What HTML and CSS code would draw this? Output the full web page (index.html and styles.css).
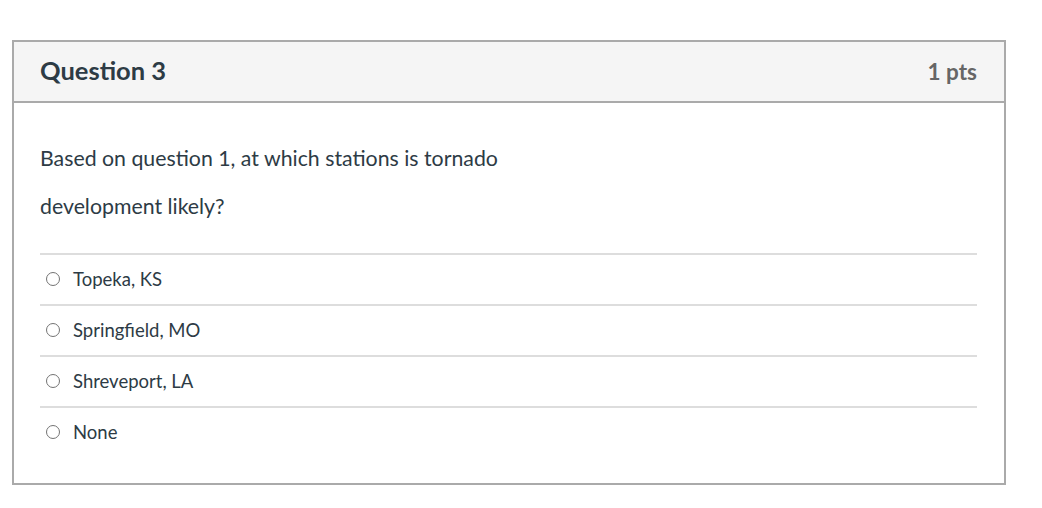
FILE: index.html
```html
<!DOCTYPE html>
<html>
<head>
<meta charset="utf-8">
<link rel="stylesheet" href="styles.css">
</head>
<body>
<div class="question">
  <div class="header">
    <div class="title">Question 3</div>
    <div class="pts">1 pts</div>
  </div>
  <div class="content">
    <div class="text">
      <p>Based on question 1, at which stations is tornado</p>
      <p>development likely?</p>
    </div>
    <div class="answers">
      <label class="answer"><span class="radio"></span><span>Topeka, KS</span></label>
      <label class="answer"><span class="radio"></span><span>Springfield, MO</span></label>
      <label class="answer"><span class="radio"></span><span>Shreveport, LA</span></label>
      <label class="answer"><span class="radio"></span><span>None</span></label>
    </div>
  </div>
</div>
</body>
</html>
```
FILE: styles.css
```css
html, body {
  margin: 0;
  background: #fff;
}
body {
  padding: 40px 0 0 12px;
  font-family: Lato, "Open Sans", sans-serif;
  color: #2d3b45;
}
.question {
  width: 990px;
  border: 2px solid #aaaaaa;
}
.header {
  height: 59px;
  background: #f5f5f5;
  border-bottom: 2px solid #aaaaaa;
  display: flex;
  align-items: center;
  justify-content: space-between;
  padding: 0 27px 0 26px;
}
.title {
  font-size: 25.5px;
  font-weight: 700;
  color: #2d3b45;
  margin-bottom: 3px;
}
.pts {
  font-size: 22.5px;
  font-weight: 700;
  color: #666666;
}
.content {
  padding: 31px 27px 26px 26px;
}
.text p {
  margin: 0;
  font-size: 21.3px;
  line-height: 48px;
}
.answers {
  margin-top: 23px;
}
.answer {
  display: flex;
  align-items: center;
  box-sizing: border-box;
  height: 51px;
  padding-bottom: 2px;
  border-top: 2px solid #dddddd;
  font-size: 18.5px;
  color: #2d3b45;
}
.radio {
  width: 12px;
  height: 12px;
  border: 1.7px solid #737373;
  border-radius: 50%;
  margin: 0 13px 0 6px;
  flex: none;
}
```
